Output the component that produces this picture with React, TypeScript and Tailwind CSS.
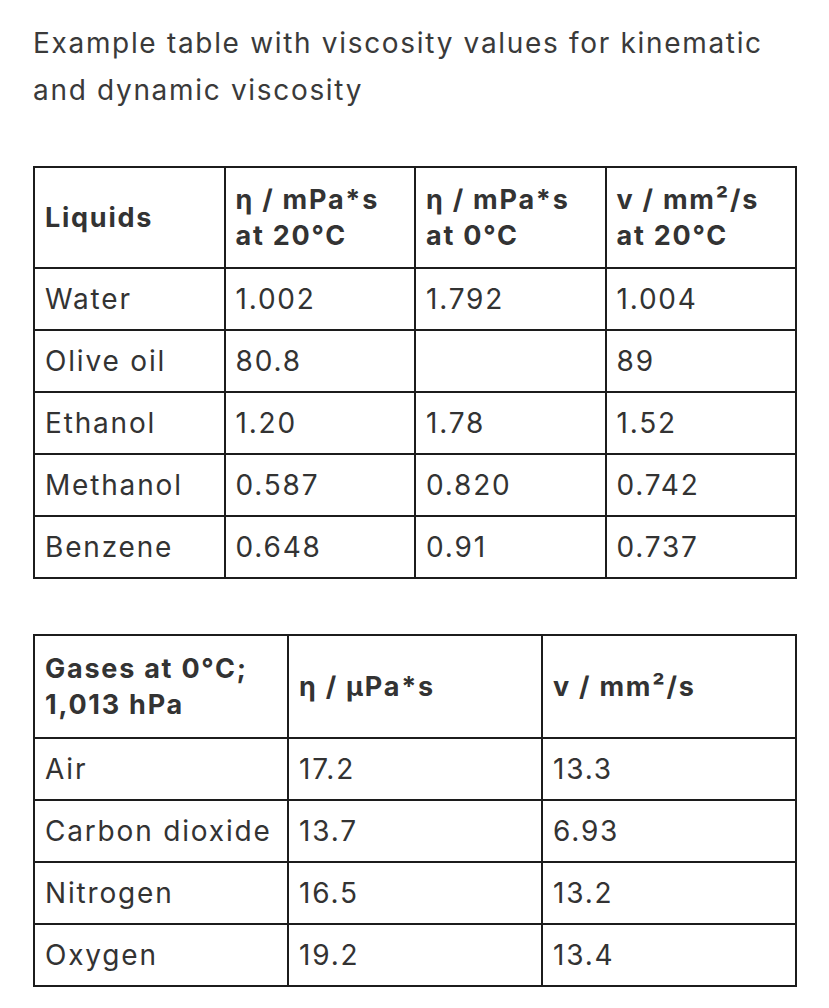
import React from "react";

type Row = [string, string, string, string?];

const liquids: Row[] = [
  ["Water", "1.002", "1.792", "1.004"],
  ["Olive oil", "80.8", "", "89"],
  ["Ethanol", "1.20", "1.78", "1.52"],
  ["Methanol", "0.587", "0.820", "0.742"],
  ["Benzene", "0.648", "0.91", "0.737"],
];

const gases: Row[] = [
  ["Air", "17.2", "13.3"],
  ["Carbon dioxide", "13.7", "6.93"],
  ["Nitrogen", "16.5", "13.2"],
  ["Oxygen", "19.2", "13.4"],
];

const cell = "border-2 border-[#1c1c1c] pl-[10px] pr-1 align-middle";

function HeadCell({ lines }: { lines: string[] }) {
  return (
    <th className={`${cell} text-left font-bold text-[27px] leading-[36px] tracking-[0.065em] text-[#333]`}>
      {lines.map((l) => (
        <div key={l}>{l}</div>
      ))}
    </th>
  );
}

export default function App() {
  return (
    <div className="min-h-screen bg-white pt-5 pl-[33px] pr-[32px] font-['Inter','Liberation_Sans',Arial,sans-serif] text-[#333]">
      <p className="text-[28px] leading-[47px] tracking-[0.06em] text-[#3a3a3a]">
        Example table with viscosity values for kinematic
        <br />
        and dynamic viscosity
      </p>

      <table className="mt-[52px] w-full table-fixed border-collapse">
        <thead>
          <tr className="h-[101px]">
            <HeadCell lines={["Liquids"]} />
            <HeadCell lines={["η / mPa*s", "at 20°C"]} />
            <HeadCell lines={["η / mPa*s", "at 0°C"]} />
            <HeadCell lines={["v / mm²/s", "at 20°C"]} />
          </tr>
        </thead>
        <tbody>
          {liquids.map((r) => (
            <tr key={r[0]} className="h-[62px] text-[28px] tracking-[0.065em]">
              {r.map((v, i) => (
                <td key={i} className={cell}>
                  {v}
                </td>
              ))}
            </tr>
          ))}
        </tbody>
      </table>

      <table className="mt-[55px] w-full table-fixed border-collapse">
        <thead>
          <tr className="h-[103px]">
            <HeadCell lines={["Gases at 0°C;", "1,013 hPa"]} />
            <HeadCell lines={["η / μPa*s"]} />
            <HeadCell lines={["v / mm²/s"]} />
          </tr>
        </thead>
        <tbody>
          {gases.map((r) => (
            <tr key={r[0]} className="h-[62px] text-[28px] tracking-[0.065em]">
              {r.map((v, i) => (
                <td key={i} className={cell}>
                  {v}
                </td>
              ))}
            </tr>
          ))}
        </tbody>
      </table>
    </div>
  );
}
